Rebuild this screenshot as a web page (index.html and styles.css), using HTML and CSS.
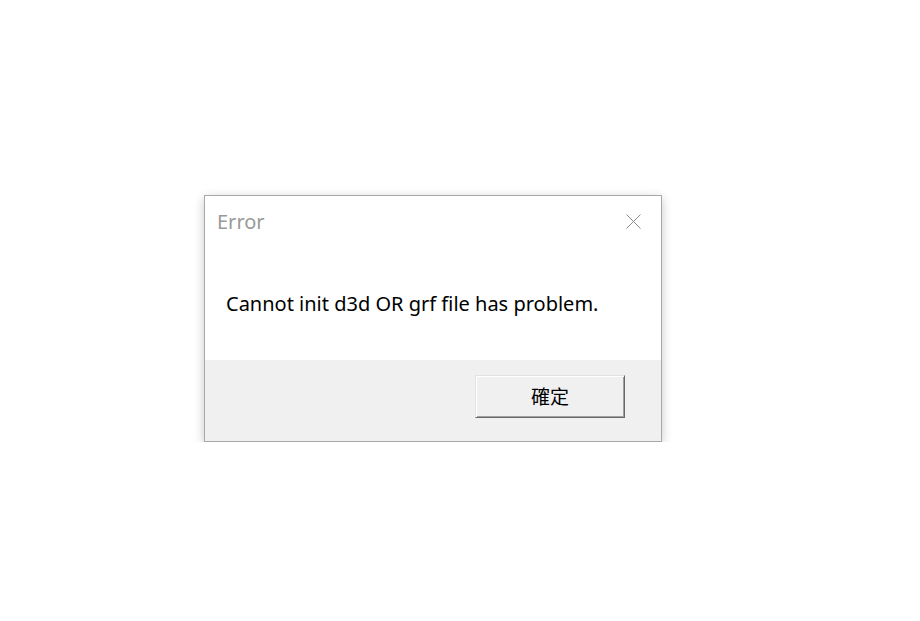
FILE: index.html
```html
<!DOCTYPE html>
<html>
<head>
<meta charset="utf-8">
<link rel="stylesheet" href="styles.css">
</head>
<body>
<div class="dialog">
  <div class="main">
    <div class="titlebar">
      <span class="title">Error</span>
      <span class="close">
        <svg width="15" height="15" viewBox="0 0 15 15"><path d="M0.5 0.5 L14.5 14.5 M14.5 0.5 L0.5 14.5" stroke="#8a8a8a" stroke-width="1" fill="none"/></svg>
      </span>
    </div>
    <div class="message">Cannot init d3d OR grf file has problem.</div>
  </div>
  <div class="footer">
    <button class="btn">確定</button>
  </div>
</div>
</body>
</html>
```
FILE: styles.css
```css
html, body {
  margin: 0;
  padding: 0;
  background: #ffffff;
}
body {
  padding-top: 195px;
  padding-left: 204px;
}
.dialog {
  width: 456px;
  border: 1px solid #a8a8a8;
  background: #ffffff;
  box-shadow: 0 3px 10px rgba(0,0,0,0.22);
  display: flex;
  flex-direction: column;
}
.main {
  height: 164px;
  display: flex;
  flex-direction: column;
}
.titlebar {
  height: 50px;
  display: flex;
  align-items: center;
  justify-content: space-between;
  padding: 0 20px 0 12px;
}
.title {
  font-family: "Noto Sans", "Open Sans", sans-serif;
  font-size: 20px;
  color: #999999;
  margin-top: 1px;
}
.close {
  display: flex;
  width: 15px;
  height: 15px;
  margin-top: 1px;
}
.message {
  font-family: "Noto Sans", "Open Sans", sans-serif;
  font-size: 20px;
  color: #000000;
  padding-left: 21px;
  margin-top: 44px;
}
.footer {
  height: 81px;
  background: #f0f0f0;
  display: flex;
  justify-content: flex-end;
  align-items: flex-start;
  padding-right: 36px;
  padding-top: 15px;
  box-sizing: border-box;
}
.btn {
  width: 150px;
  height: 43px;
  box-sizing: border-box;
  background: #f0f0f0;
  border: 1px solid;
  border-color: #e3e3e3 #696969 #696969 #e3e3e3;
  box-shadow: inset 1px 1px 0 #ffffff, inset -1px -1px 0 #a0a0a0;
  font-family: "Noto Sans CJK TC", "Noto Sans", sans-serif;
  font-size: 19px;
  color: #000000;
  padding: 0 0 2px 0;
  margin: 0;
}
```
